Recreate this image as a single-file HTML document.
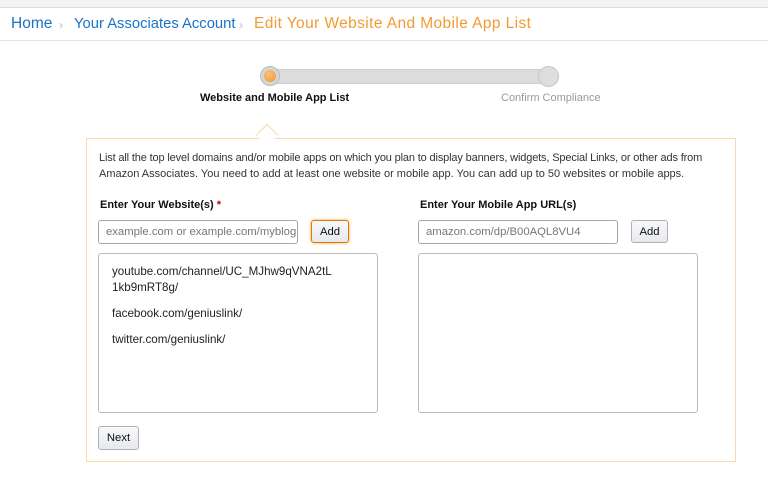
<!DOCTYPE html><html><head><style>
body{margin:0;width:768px;height:481px;background:#fff;font-family:"Liberation Sans",sans-serif;position:relative;overflow:hidden;color:#111}
.a{position:absolute}
.bc{font-size:15.5px;top:15px;white-space:nowrap}
.in{position:absolute;border:1px solid #a6a6a6;border-radius:3px;box-sizing:border-box;background:#fff;font-size:11.3px;color:#777;padding:0 0 0 7px;line-height:22px;height:24px;white-space:nowrap;overflow:hidden}
.btn{position:absolute;border:1px solid #adb1b8;border-radius:3px;box-sizing:border-box;background:linear-gradient(#f7f8fa,#e7e9ec);font-size:11.3px;display:flex;align-items:center;justify-content:center;height:23px}
.ta{position:absolute;border:1px solid #bbb;border-radius:3px;box-sizing:border-box;background:#fff;font-size:11.6px;color:#222}
.lb{font-size:11px;font-weight:bold;color:#111}
</style></head><body>
<div class="a" style="left:0;top:0;width:768px;height:7px;background:#f3f3f3;border-bottom:1px solid #ddd"></div>
<div class="a" style="left:0;top:40px;width:768px;height:1px;background:#e3e3e3"></div>
<div class="a bc" style="left:11px;color:#1a73c8">Home</div>
<div class="a bc" style="left:59px;color:#bbb;font-size:12px;top:18px">›</div>
<div class="a bc" style="left:74px;color:#1a73c8;font-size:14.8px;top:16px">Your Associates Account</div>
<div class="a bc" style="left:239px;color:#bbb;font-size:12px;top:18px">›</div>
<div class="a bc" style="left:254px;color:#f39a32;letter-spacing:0.4px">Edit Your Website And Mobile App List</div>
<div class="a" style="left:268px;top:69px;width:282px;height:13px;background:#dcdcdc;border:1px solid #cfcfcf;border-radius:7px"></div>
<div class="a" style="left:260px;top:66px;width:18px;height:18px;border-radius:50%;background:#d6d6d6;border:1px solid #bbb"></div>
<div class="a" style="left:264px;top:70px;width:12px;height:12px;border-radius:50%;background:radial-gradient(circle at 40% 35%,#fbc27a,#f0952f)"></div>
<div class="a" style="left:538px;top:66px;width:19px;height:19px;border-radius:50%;background:#dedede;border:1px solid #c4c4c4"></div>
<div class="a" style="left:200px;top:92px;font-size:11px;font-weight:bold">Website and Mobile App List</div>
<div class="a" style="left:501px;top:92px;font-size:11px;color:#999">Confirm Compliance</div>
<div class="a" style="left:86px;top:138px;width:650px;height:324px;border:1px solid #f8d9a8;box-sizing:border-box"></div>
<div class="a" style="left:259px;top:127px;width:15px;height:15px;background:#fff;border-left:1px solid #f8d9a8;border-top:1px solid #f8d9a8;transform:rotate(45deg)"></div>
<div class="a" style="left:99px;top:150px;font-size:11px;line-height:16px;color:#333;white-space:nowrap"><span style="letter-spacing:-0.15px">List all the top level domains and/or mobile apps on which you plan to display banners, widgets, Special Links, or other ads from</span><br>Amazon Associates. You need to add at least one website or mobile app. You can add up to 50 websites or mobile apps.</div>
<div class="a lb" style="left:100px;top:199px">Enter Your Website(s) <span style="color:#c40000">*</span></div>
<div class="a lb" style="left:420px;top:199px">Enter Your Mobile App URL(s)</div>
<div class="in" style="left:98px;top:220px;width:200px">example.com or example.com/myblog</div>
<div class="btn" style="left:311px;top:220px;width:38px;border-color:#e77600;box-shadow:0 0 3px #f3a847">Add</div>
<div class="in" style="left:418px;top:220px;width:200px">amazon.com/dp/B00AQL8VU4</div>
<div class="btn" style="left:631px;top:220px;width:37px">Add</div>
<div class="ta" style="left:98px;top:253px;width:280px;height:160px;padding:10px 13px;line-height:16px">youtube.com/channel/UC_MJhw9qVNA2tL<br>1kb9mRT8g/<div style="margin-top:10px">facebook.com/geniuslink/</div><div style="margin-top:10px">twitter.com/geniuslink/</div></div>
<div class="ta" style="left:418px;top:253px;width:280px;height:160px"></div>
<div class="btn" style="left:98px;top:426px;width:41px;height:24px">Next</div>
</body></html>
